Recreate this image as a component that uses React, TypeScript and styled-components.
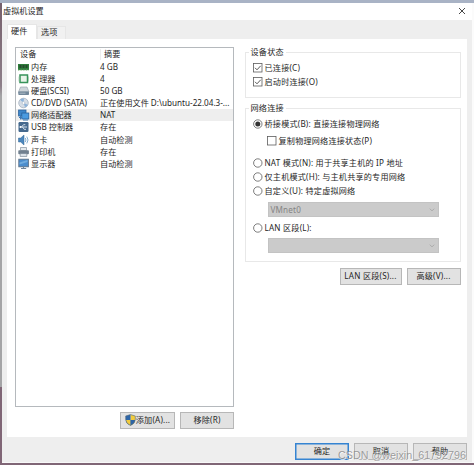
import React, { useState } from 'react';
import styled, { createGlobalStyle } from 'styled-components';

const GlobalStyle = createGlobalStyle`
    * {
        box-sizing: border-box;
    }

    body {
        margin: 0;
        overflow: hidden;
        font-family: "Noto Sans", "Noto Sans CJK SC", sans-serif;
        font-size: 8.15px;
        line-height: 12px;
        color: #262626;
        white-space: nowrap;
    }
`

const Desktop = styled.div`
    width: 474px;
    height: 465px;
    padding: 3px 0 2px 2px;
    background: linear-gradient(#a9b3c5 3px, #76606c 3px, #8d7f89 86px, #a4a4a6 96px, #a4a4a6 387px, #806676 387px);
`

const Dialog = styled.div`
    position: relative;
    display: flex;
    flex-direction: column;
    height: 460px;
    background: #eeeeee;
    border-right: 2px solid #fbfbfb;
    border-bottom: 1px solid #f8f8f8;
`

const TitleBar = styled.div`
    display: flex;
    justify-content: space-between;
    height: 17px;
    padding: 2px 6px 0 1px;
    background: #fff;
`

const TabBar = styled.div`
    display: flex;
    align-items: flex-end;
    height: 19px;
    padding-left: 5px;
`

const Tab = styled.button<{ $active: boolean }>`
    width: ${({ $active }) => ($active ? 30 : 29)}px;
    height: ${({ $active }) => ($active ? 15 : 13)}px;
    padding: 0 0 2px 3px;
    border: 1px solid #e6e6e6;
    border-bottom: 0;
    background: ${({ $active }) => ($active ? '#fff' : '#f1f1f1')};
    color: inherit;
    font: inherit;
    line-height: 10px;
    text-align: left;
`

const Page = styled.div`
    display: flex;
    height: 398px;
    margin: 0 5px;
    padding-left: 8px;
    background: #fff;
`

const HardwareColumn = styled.div`
    width: 219px;
    padding-top: 8px;
`

const DeviceList = styled.div`
    height: 360px;
    padding-top: 1px;
    border: 1px solid #b5b9bd;
`

const DeviceRow = styled.div<{ $selected?: boolean }>`
    display: grid;
    grid-template-columns: 15px 69px 1fr;
    align-items: center;
    height: 12.15px;
    background: ${({ $selected }) => ($selected ? '#eeeeee' : 'transparent')};

    svg {
        margin-left: 2px;
    }
`

const DeviceHeader = styled.div`
    display: grid;
    grid-template-columns: 80px 1fr;
    height: 11px;
    margin-bottom: 0.6px;
    padding-left: 4px;
    line-height: 10px;

    span + span {
        padding-left: 3px;
        border-left: 1px solid #ededed;
    }
`

const ButtonRow = styled.div<{ $top: number }>`
    display: flex;
    justify-content: flex-end;
    gap: 5px;
    padding-top: ${({ $top }) => $top}px;
`

const Button = styled.button<{ $width: number; $primary?: boolean }>`
    display: flex;
    align-items: center;
    justify-content: center;
    width: ${({ $width }) => $width}px;
    height: 17px;
    padding: 0 0 1px;
    border: 1px solid ${({ $primary }) => ($primary ? '#3584d2' : '#b7b7b7')};
    background: #e2e2e2;
    color: inherit;
    font: inherit;
    letter-spacing: 0.2px;
    box-shadow: ${({ $primary }) => ($primary ? 'inset 0 0 0 0.5px #3584d2' : 'none')};
`

const SettingsColumn = styled.div`
    width: 216px;
    margin-left: 10.5px;
    padding-top: 7px;
    letter-spacing: 0.19px;
`

const Group = styled.fieldset<{ $height: number; $gap: number }>`
    min-width: 0;
    height: ${({ $height }) => $height}px;
    margin: 0 0 ${({ $gap }) => $gap}px;
    padding: 0 0 0 7px;
    border: 1px solid #e8e8e8;
`

const GroupTitle = styled.legend`
    margin-left: -4px;
    padding: 0 2px;
`

const Option = styled.label<{ $height: number; $top?: number; $indent?: boolean }>`
    display: flex;
    align-items: center;
    gap: 2px;
    height: ${({ $height }) => $height}px;
    margin-top: ${({ $top = 0 }) => $top}px;
    padding-left: ${({ $indent }) => ($indent ? 14 : 0)}px;
`

const Dropdown = styled.div`
    display: flex;
    align-items: center;
    justify-content: space-between;
    width: 171px;
    height: 15px;
    margin: 4px 0 4px 15px;
    padding: 0 3px 0 2px;
    border: 1px solid #c3c3c3;
    background: #cbcbcb;
    color: #848484;
`

const Footer = styled.div`
    padding: 0 5px;
`

const Watermark = styled.div`
    position: absolute;
    right: 6px;
    bottom: 0;
    font-family: "Liberation Sans", sans-serif;
    font-size: 10.75px;
    line-height: 14px;
    color: rgba(140, 140, 140, 0.85);
    text-shadow: 0.5px 0.5px 0 rgba(255, 255, 255, 0.8);
`

type Device = {
    id: string;
    name: string;
    summary: string;
}

const devices: Device[] = [
    { id: 'memory', name: '内存', summary: '4 GB' },
    { id: 'cpu', name: '处理器', summary: '4' },
    { id: 'disk', name: '硬盘(SCSI)', summary: '50 GB' },
    { id: 'cd', name: 'CD/DVD (SATA)', summary: '正在使用文件 D:\\ubuntu-22.04.3-...' },
    { id: 'network', name: '网络适配器', summary: 'NAT' },
    { id: 'usb', name: 'USB 控制器', summary: '存在' },
    { id: 'sound', name: '声卡', summary: '自动检测' },
    { id: 'printer', name: '打印机', summary: '存在' },
    { id: 'display', name: '显示器', summary: '自动检测' },
]

const deviceArt: Record<string, React.ReactNode> = {
    memory: (
        <>
            <rect x="0" y="3" width="11" height="6" fill="#2f7d3c" />
            <path d="M1.5 4h2v3h-2zM4.5 4h2v3h-2zM7.5 4h2v3h-2z" fill="#244a2c" />
            <path d="M0 9.2h11" stroke="#8fc08c" strokeDasharray="1 .6" />
        </>
    ),
    cpu: (
        <>
            <rect x="2" y="2" width="7.5" height="7.5" fill="#e9f4e9" stroke="#37935a" strokeWidth="1.5" />
            <path d="M1 3.5v5M10.5 3.5v5" stroke="#8cba98" strokeWidth=".6" />
        </>
    ),
    disk: (
        <>
            <path d="M2.5 2h6.5l2 5H.5z" fill="#cdd4da" stroke="#8e9ba6" strokeWidth=".6" />
            <rect x=".3" y="6.5" width="10.7" height="3.5" rx=".8" fill="#71879a" />
            <path d="M1.5 8.2h6" stroke="#c3ced7" strokeWidth=".7" />
        </>
    ),
    cd: (
        <>
            <circle cx="5.5" cy="6" r="4.8" fill="#d5dde6" stroke="#9dabb9" strokeWidth=".7" />
            <path d="M5.5 6L2 2.7A4.6 4.6 0 0 1 6 1.5zM5.5 6l4.3 1.7A4.6 4.6 0 0 1 7 10.3z" fill="#8eb4db" />
            <circle cx="5.5" cy="6" r="1.4" fill="#fff" stroke="#98a9ba" strokeWidth=".5" />
        </>
    ),
    network: (
        <>
            <rect x=".6" y="1" width="7.4" height="6" fill="#3e86c9" stroke="#2a629d" strokeWidth=".8" />
            <rect x="3.8" y="4" width="7" height="6" fill="#4b9be0" stroke="#27609b" strokeWidth=".8" />
            <path d="M1 8.5h3M2.5 6.5v4M5 11h5" stroke="#3c78b4" />
        </>
    ),
    usb: (
        <>
            <rect x=".5" y="1" width="10" height="10" rx="1.2" fill="#45698e" />
            <path d="M2 6h7M3.5 6l2-2.3h1.8M4.5 6l1.7 2.3H8" stroke="#e3edf5" strokeWidth=".9" fill="none" />
            <circle cx="2.5" cy="6" r="1" fill="#fff" />
        </>
    ),
    sound: (
        <>
            <path d="M.5 4h2.2L6 1v10L2.7 8H.5z" fill="#4b86bd" stroke="#376996" strokeWidth=".5" />
            <path d="M7.3 4q1.3 2 0 4M8.8 2.6q2.5 3.4 0 6.8" stroke="#78a5cb" strokeWidth=".9" fill="none" />
        </>
    ),
    printer: (
        <>
            <path d="M2.5 1.5h6v3h-6z" fill="#e4e9ed" stroke="#8794a0" strokeWidth=".7" />
            <rect x=".3" y="4.3" width="10.6" height="4" rx=".8" fill="#71808f" />
            <path d="M2.2 7.5h6.6v3H2.2z" fill="#dce2e8" stroke="#70808f" strokeWidth=".6" />
        </>
    ),
    display: (
        <>
            <rect x=".8" y="1.2" width="9.6" height="7.6" fill="#4b8dcd" stroke="#5d7288" strokeWidth=".9" />
            <path d="M1.5 4.5l8-2.5v2l-8 2.5z" fill="#72addf" />
            <path d="M5.5 8.8v1.5M3 10.5h5.2" stroke="#70869c" strokeWidth="1.1" />
        </>
    ),
}

const DeviceIcon = ({ id }: { id: string }) => (
    <svg width="12" height="12" viewBox="0 0 12 12">{deviceArt[id]}</svg>
)

const Shield = () => (
    <svg width="11" height="12" viewBox="0 0 11 12">
        <path d="M5.5 .6L10.3 2v3.5Q10.3 9.5 5.5 11.5Z" fill="#f2cb3d" />
        <path d="M5.5 .6L.7 2v3.5Q.7 9.5 5.5 11.5Z" fill="#2c65a8" />
        <path d="M.8 6h4.7v5.5Q1.4 9.7.8 6Z" fill="#f2cb3d" />
        <path d="M5.5 6h4.7Q9.6 9.7 5.5 11.5Z" fill="#2c65a8" />
        <path d="M5.5 .6L10.3 2v3.5Q10.3 9.5 5.5 11.5Q.7 9.5.7 5.5V2Z" fill="none" stroke="#52687b" strokeWidth=".6" />
    </svg>
)

const CheckBox = ({ checked }: { checked: boolean }) => (
    <svg width="10" height="10" viewBox="0 0 10 10">
        <rect x=".5" y=".5" width="8.5" height="8.5" fill="#fff" stroke="#5c5c5c" strokeWidth=".8" />
        {checked && <path d="M2 4.8l2 2L7.7 2.8" fill="none" stroke="#444" strokeWidth=".9" />}
    </svg>
)

const Radio = ({ checked }: { checked: boolean }) => (
    <svg width="10" height="10" viewBox="0 0 10 10">
        <circle cx="4.8" cy="5" r="4.2" fill="#fff" stroke="#5c5c5c" strokeWidth=".8" />
        {checked && <circle cx="4.8" cy="5" r="2.5" fill="#333" />}
    </svg>
)

const Chevron = () => (
    <svg width="6" height="4" viewBox="0 0 6 4">
        <path d="M.8 .7L3 2.9 5.2 .7" fill="none" stroke="#a2a2a2" strokeWidth=".8" />
    </svg>
)

const CloseIcon = styled.svg`
    margin-top: 2px;
`

const App = () => {
    const [tab, setTab] = useState<string>('hardware')
    const [selected, setSelected] = useState<string>('network')
    const [mode, setMode] = useState<string>('bridge')

    return (
        <>
            <GlobalStyle />
            <Desktop>
                <Dialog>
                    <TitleBar>
                        <span>虚拟机设置</span>
                        <CloseIcon width="8" height="8" viewBox="0 0 8 8">
                            <path d="M1 1l6 6M7 1L1 7" stroke="#333" strokeWidth=".9" />
                        </CloseIcon>
                    </TitleBar>
                    <TabBar>
                        <Tab $active={tab === 'hardware'} onClick={() => setTab('hardware')}>硬件</Tab>
                        <Tab $active={tab === 'options'} onClick={() => setTab('options')}>选项</Tab>
                    </TabBar>
                    <Page>
                        <HardwareColumn>
                            <DeviceList>
                                <DeviceHeader>
                                    <span>设备</span>
                                    <span>摘要</span>
                                </DeviceHeader>
                                {devices.map((device) => (
                                    <DeviceRow key={device.id} $selected={selected === device.id} onClick={() => setSelected(device.id)}>
                                        <DeviceIcon id={device.id} />
                                        <span>{device.name}</span>
                                        <span>{device.summary}</span>
                                    </DeviceRow>
                                ))}
                            </DeviceList>
                            <ButtonRow $top={5}>
                                <Button $width={55}><Shield />添加(A)...</Button>
                                <Button $width={54}>移除(R)</Button>
                            </ButtonRow>
                        </HardwareColumn>
                        <SettingsColumn>
                            <Group $height={52} $gap={4}>
                                <GroupTitle>设备状态</GroupTitle>
                                <Option $height={19}><CheckBox checked />已连接(C)</Option>
                                <Option $height={10}><CheckBox checked />启动时连接(O)</Option>
                            </Group>
                            <Group $height={160} $gap={0}>
                                <GroupTitle>网络连接</GroupTitle>
                                <Option $height={20} onClick={() => setMode('bridge')}><Radio checked={mode === 'bridge'} />桥接模式(B): 直接连接物理网络</Option>
                                <Option $height={14} $indent><CheckBox checked={false} />复制物理网络连接状态(P)</Option>
                                <Option $height={14} $top={8} onClick={() => setMode('nat')}><Radio checked={mode === 'nat'} />NAT 模式(N): 用于共享主机的 IP 地址</Option>
                                <Option $height={14} onClick={() => setMode('host')}><Radio checked={mode === 'host'} />仅主机模式(H): 与主机共享的专用网络</Option>
                                <Option $height={14} onClick={() => setMode('custom')}><Radio checked={mode === 'custom'} />自定义(U): 特定虚拟网络</Option>
                                <Dropdown>VMnet0<Chevron /></Dropdown>
                                <Option $height={13} onClick={() => setMode('lan')}><Radio checked={mode === 'lan'} />LAN 区段(L):</Option>
                                <Dropdown><span /><Chevron /></Dropdown>
                            </Group>
                            <ButtonRow $top={6}>
                                <Button $width={62}>LAN 区段(S)...</Button>
                                <Button $width={54}>高级(V)...</Button>
                            </ButtonRow>
                        </SettingsColumn>
                    </Page>
                    <Footer>
                        <ButtonRow $top={6}>
                            <Button $width={54} $primary>确定</Button>
                            <Button $width={54}>取消</Button>
                            <Button $width={54}>帮助</Button>
                        </ButtonRow>
                    </Footer>
                    <Watermark>CSDN @weixin_61792796</Watermark>
                </Dialog>
            </Desktop>
        </>
    )
}

export default App;
